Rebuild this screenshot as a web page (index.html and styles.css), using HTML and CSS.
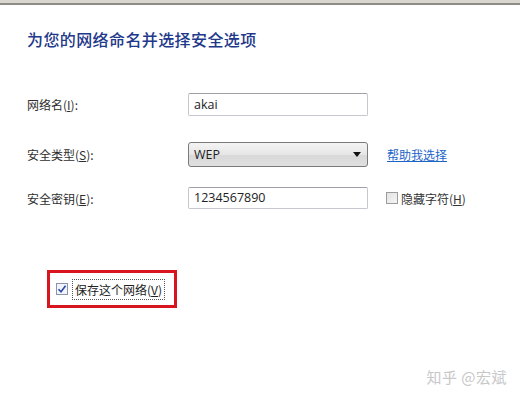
FILE: index.html
```html
<!DOCTYPE html>
<html lang="zh-CN">
<head>
<meta charset="utf-8">
<title>网络设置</title>
<link rel="stylesheet" href="styles.css">
</head>
<body>
<div class="topbar"></div>
<main class="content">
  <h1 class="title">为您的网络命名并选择安全选项</h1>
  <div class="row row-name">
    <label class="label">网络名(<u>I</u>):</label>
    <div class="input">akai</div>
  </div>
  <div class="row row-type">
    <label class="label">安全类型(<u>S</u>):</label>
    <div class="select"><span>WEP</span><span class="arrow"></span></div>
    <a class="help" href="#">帮助我选择</a>
  </div>
  <div class="row row-key">
    <label class="label">安全密钥(<u>E</u>):</label>
    <div class="input input-key">1234567890</div>
    <span class="hide-opt"><span class="box"></span>隐藏字符(<u>H</u>)</span>
  </div>
  <div class="highlight">
    <span class="box checked"><svg viewBox="0 0 12 12" width="12" height="12"><path d="M2.5 6.2 L5 8.8 L9.6 2.8" fill="none" stroke="#2a4aa8" stroke-width="1.6"/></svg></span>
    <span class="focus">保存这个网络(<u>V</u>)</span>
  </div>
</main>
<div class="watermark">知乎 @宏斌</div>
</body>
</html>
```
FILE: styles.css
```css
html, body {
  margin: 0;
  padding: 0;
  background: #ffffff;
}
body {
  width: 520px;
  height: 400px;
  position: relative;
  overflow: hidden;
  font-family: "Noto Sans CJK SC", "Noto Sans", sans-serif;
  font-size: 12px;
  color: #333;
}
.topbar {
  height: 3px;
  background: #d9d6cf;
  border-bottom: 2px solid #8f8c86;
}
.content {
  padding: 0 27px;
}
.title {
  margin: 24px 0 0;
  font-size: 16px;
  line-height: 20px;
  font-weight: 500;
  color: #22388a;
  letter-spacing: 0.4px;
}
.row {
  display: flex;
  align-items: center;
}
.row-name { height: 24px; margin-top: 43px; }
.row-type { height: 25px; margin-top: 26px; }
.row-key { height: 24px; margin-top: 19px; }
.label {
  width: 161px;
  flex: none;
  font-size: 12px;
  color: #2e2e2e;
}
.label u, .hide-opt u, .focus u {
  text-decoration: underline;
}
.input {
  box-sizing: border-box;
  width: 180px;
  height: 23px;
  border: 1px solid #c5c7cc;
  border-top-color: #9ea1a8;
  border-radius: 2px;
  padding: 0 5px;
  font-family: "Open Sans", "Noto Sans", sans-serif;
  font-size: 12.5px;
  line-height: 21px;
  color: #222;
}
.input-key { height: 22px; line-height: 20px; }
.select {
  box-sizing: border-box;
  width: 180px;
  height: 25px;
  border: 1px solid #7a7a7a;
  border-radius: 3px;
  background: linear-gradient(#f4f4f4, #e6e6e6 50%, #d8d8d8 51%, #e0e0e0);
  display: flex;
  align-items: center;
  justify-content: space-between;
  padding: 0 6px 0 5px;
  font-family: "Open Sans", "Noto Sans", sans-serif;
  font-size: 12.5px;
  font-weight: 500;
  color: #222;
}
.arrow {
  width: 0;
  height: 0;
  border-left: 4px solid transparent;
  border-right: 4px solid transparent;
  border-top: 5px solid #111;
}
.help {
  margin-left: 19px;
  color: #1c64c8;
  text-decoration: underline;
  font-size: 12px;
}
.hide-opt {
  margin-left: 18px;
  display: flex;
  align-items: center;
  color: #333;
}
.box {
  box-sizing: border-box;
  width: 12px;
  height: 12px;
  border: 1px solid #9c9c9c;
  background: linear-gradient(135deg, #e4e4e4, #f4f4f4);
  margin-right: 3px;
  display: inline-block;
}
.highlight {
  box-sizing: border-box;
  margin: 60px 0 0 20px;
  width: 130px;
  height: 38px;
  border: 3px solid #d8141e;
  display: flex;
  align-items: center;
  padding-left: 6px;
}
.box.checked {
  background: #f2f4f8;
  border-color: #8a94ad;
  margin-right: 4px;
  position: relative;
}
.box.checked svg {
  position: absolute;
  left: -1px;
  top: -1px;
}
.focus {
  border: 1px dotted #555;
  padding: 1px 2px;
  line-height: 17px;
  color: #222;
  font-size: 12px;
}
.watermark {
  position: absolute;
  right: 13px;
  bottom: 13px;
  font-size: 15px;
  color: #c8c8c8;
  letter-spacing: 0.5px;
}
```
